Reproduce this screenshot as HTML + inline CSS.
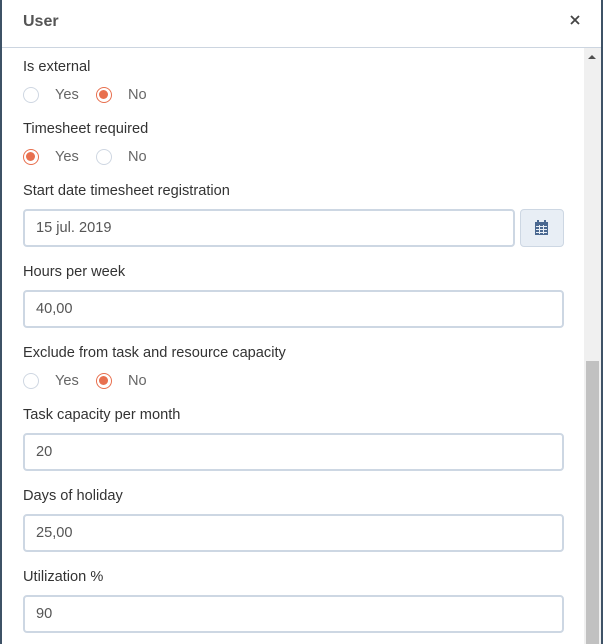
<!DOCTYPE html>
<html><head><meta charset="utf-8"><style>
*{box-sizing:border-box;margin:0;padding:0}
html,body{width:603px;height:644px;overflow:hidden;background:#fff;font-family:"Liberation Sans",sans-serif}
.a{position:absolute}
.lb{position:absolute;left:23px;font-size:14.6px;color:#333;line-height:16px}
.in{position:absolute;left:23px;width:541px;height:38px;border:2px solid #cdd7e3;border-radius:4px;background:#fff;font-size:14.6px;color:#555;padding-left:11px;line-height:34px}
.r{position:absolute;width:16px;height:16px;border-radius:50%;border:1px solid #cfd7e2;background:#fff}
.r.c{border:1.5px solid #e8704f}
.r.c:after{content:"";position:absolute;left:2px;top:2px;width:9px;height:9px;border-radius:50%;background:#e8704f}
.rt{position:absolute;font-size:14.6px;color:#666;line-height:16px}
</style></head><body>
<div class="a" style="left:0;top:0;width:2px;height:644px;background:#3e5266"></div>
<div class="a" style="left:601px;top:0;width:2px;height:644px;background:#3e5266"></div>
<div class="a" style="left:23px;top:12px;font-size:16px;font-weight:bold;color:#555;line-height:20px">User</div>
<svg class="a" style="left:570px;top:15px" width="10" height="10" viewBox="0 0 10 10"><path d="M1 1L9 9M9 1L1 9" stroke="#444" stroke-width="1.8"/></svg>
<div class="a" style="left:2px;top:47px;width:599px;height:1px;background:#ccd5e0"></div>
<div class="a" style="left:584px;top:48px;width:17px;height:596px;background:#f0f0f0"></div>
<div class="a" style="left:586px;top:361px;width:13px;height:283px;background:#c1c1c1"></div>
<div class="a" style="left:588px;top:55px;width:0;height:0;border-left:4px solid transparent;border-right:4px solid transparent;border-bottom:4px solid #505050"></div>

<div class="lb" style="top:59px">Is external</div>
<div class="r" style="left:23px;top:87px"></div><div class="rt" style="left:55px;top:87px">Yes</div>
<div class="r c" style="left:96px;top:87px"></div><div class="rt" style="left:128px;top:87px">No</div>

<div class="lb" style="top:121px">Timesheet required</div>
<div class="r c" style="left:23px;top:149px"></div><div class="rt" style="left:55px;top:149px">Yes</div>
<div class="r" style="left:96px;top:149px"></div><div class="rt" style="left:128px;top:149px">No</div>

<div class="lb" style="top:183px">Start date timesheet registration</div>
<div class="in" style="top:209px;width:492px">15 jul. 2019</div>
<div class="a" style="left:520px;top:209px;width:44px;height:38px;border:1px solid #cdd7e3;border-radius:4px;background:#e8eef5"></div>
<svg class="a" style="left:535px;top:220px" width="13" height="15" viewBox="0 0 13 15">
<rect x="0" y="2" width="13" height="13" fill="#4a6890"/>
<rect x="2" y="0" width="2" height="3" fill="#4a6890"/><rect x="9" y="0" width="2" height="3" fill="#4a6890"/>
<g fill="#e8eef5"><rect x="1" y="6" width="11" height="1"/><rect x="1" y="9" width="11" height="1"/><rect x="1" y="12" width="11" height="1"/><rect x="4" y="5" width="1" height="9"/><rect x="8" y="5" width="1" height="9"/></g>
</svg>

<div class="lb" style="top:264px">Hours per week</div>
<div class="in" style="top:290px">40,00</div>

<div class="lb" style="top:345px">Exclude from task and resource capacity</div>
<div class="r" style="left:23px;top:373px"></div><div class="rt" style="left:55px;top:373px">Yes</div>
<div class="r c" style="left:96px;top:373px"></div><div class="rt" style="left:128px;top:373px">No</div>

<div class="lb" style="top:407px">Task capacity per month</div>
<div class="in" style="top:433px">20</div>

<div class="lb" style="top:488px">Days of holiday</div>
<div class="in" style="top:514px">25,00</div>

<div class="lb" style="top:569px">Utilization %</div>
<div class="in" style="top:595px">90</div>
</body></html>
